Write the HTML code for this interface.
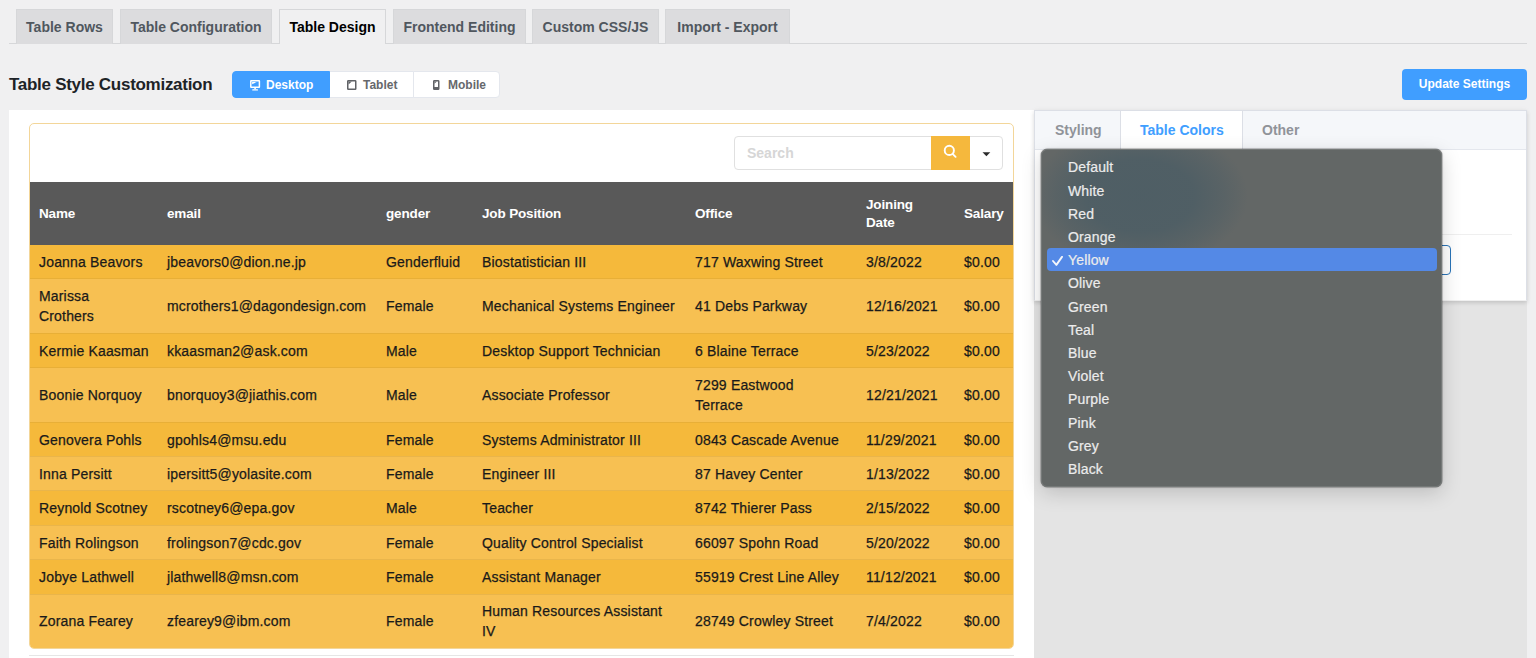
<!DOCTYPE html>
<html><head><meta charset="utf-8">
<style>
*{box-sizing:border-box;margin:0;padding:0}
html,body{width:1536px;height:658px;overflow:hidden}
body{background:#f0f0f1;font-family:"Liberation Sans",sans-serif;position:relative;color:#1d2327}
.abs{position:absolute}
/* nav tabs */
.navline{position:absolute;left:9px;top:43px;width:1518px;height:1px;background:#d6d7d9}
.tab{position:absolute;top:9px;height:35px;border:1px solid #d6d7d9;border-bottom:none;background:#dcdcde;color:#50575e;font-size:14px;font-weight:700;line-height:35px;text-align:center;white-space:nowrap}
.tab.active{background:#f0f0f1;color:#000;height:35px}
/* title */
.title{position:absolute;left:9px;top:73px;font-size:17px;font-weight:700;letter-spacing:-0.28px;color:#1d2327;white-space:nowrap;line-height:24px}
.seg{position:absolute;top:71px;height:27px;background:#fff;border:1px solid #e4e7ed;font-size:12px;font-weight:700;color:#66686c;line-height:27px;white-space:nowrap}
.seg.on{background:#409eff;border-color:#409eff;color:#fff}
.upd{position:absolute;left:1402px;top:69px;width:125px;height:31px;background:#409eff;border-radius:4px;color:#fff;font-size:12px;font-weight:700;line-height:31px;text-align:center}
/* left panel */
.lpanel{position:absolute;left:9px;top:110px;width:1025px;height:560px;background:#fff}
.twrap{position:absolute;left:29px;top:123px;width:985px;height:525.5px;border:1px solid #f3d699;border-radius:5px;overflow:hidden;background:#fff}
table{border-collapse:collapse;table-layout:fixed;width:985px;position:absolute;left:-1px;top:58px}
th{white-space:nowrap;background:#595959;color:#fff;font-size:13.5px;letter-spacing:-0.15px;font-weight:700;text-align:left;padding:2px 10px 0;line-height:18px;height:62.5px}
td{font-size:14px;color:#1a1a1a;padding:0.5px 10px 0;line-height:20px;white-space:nowrap;letter-spacing:0.17px;overflow:visible;-webkit-text-stroke:0.25px #1a1a1a;height:34.4px;border-bottom:1px solid rgba(120,90,20,.10)}
tr.o td{background:#f5b93b}
tr.e td{background:#f7c052}
tr.t td{height:54.4px}
.sline{position:absolute;left:29px;top:655px;width:985px;height:1px;background:#e6e6e6}
/* search */
.sbox{position:absolute;left:734px;top:136px;width:269px;height:34px;border:1px solid #e0e0e0;border-radius:4px;background:#fff}
.sph{position:absolute;left:747px;top:143px;font-size:14px;font-weight:700;color:#d6d6d6;line-height:20px}
.sbtn{position:absolute;left:931px;top:136px;width:39px;height:34px;background:#f5b83d}
/* right */
.rcol{position:absolute;left:1034px;top:300px;width:493px;height:400px;background:#e4e4e4}
.rpanel{position:absolute;left:1034px;top:110px;width:493px;height:190.5px;background:#fff;border:1px solid #dcdfe6;border-bottom-color:#f0f0f0;box-shadow:0 2px 4px rgba(0,0,0,.12),0 0 6px rgba(0,0,0,.04)}
.rhead{position:absolute;left:0;top:0;width:491px;height:39px;background:#f5f7fa;border-bottom:1px solid #e4e7ed}
.rtab{position:absolute;top:0;height:39px;font-size:14px;font-weight:700;color:#909399;line-height:39px;padding-left:20px;white-space:nowrap}
.rtab.on{background:#fff;color:#409eff;border-left:1px solid #dcdfe6;border-right:1px solid #dcdfe6;height:40px;padding-left:19px}
/* popup */
.pop{position:absolute;left:1041px;top:149px;width:401px;height:338px;border-radius:6px;background:#636766;border:1px solid #757978;box-shadow:0 0 0 0.5px rgba(0,0,0,.35),0 6px 20px rgba(0,0,0,.17),0 0 3px rgba(0,0,0,.15);overflow:hidden}
.pop .tint{position:absolute;left:0;top:0;width:400px;height:336px;background:radial-gradient(ellipse 108px 72px at 98px 46px,rgba(64,88,100,.58) 0%,rgba(64,88,100,.55) 50%,rgba(64,88,100,.28) 78%,rgba(64,88,100,0) 100%)}
.item{position:absolute;left:26px;font-size:14px;color:#ececec;line-height:20px;white-space:nowrap;letter-spacing:0.15px;-webkit-text-stroke:0.2px #ececec}
.hl{position:absolute;left:5px;top:98px;width:390px;height:23px;background:#5489e6;border-radius:4px}
</style></head><body>

<div class="navline"></div>
<div class="tab" style="left:16px;width:97px">Table Rows</div>
<div class="tab" style="left:120px;width:152px">Table Configuration</div>
<div class="tab active" style="left:279px;width:107px">Table Design</div>
<div class="tab" style="left:393px;width:133px">Frontend Editing</div>
<div class="tab" style="left:532px;width:127px">Custom CSS/JS</div>
<div class="tab" style="left:665px;width:125px">Import - Export</div>

<div class="title">Table Style Customization</div>
<div class="seg on" style="left:232px;width:98px;border-radius:4px 0 0 4px"><svg style="position:absolute;left:17px;top:8px" width="11" height="11" viewBox="0 0 11 11"><rect x="0.8" y="0.8" width="8.6" height="6.4" rx="0.3" fill="none" stroke="#fff" stroke-width="1.5"/><path d="M2.1 4.3 L6.6 2.1 L2.1 2.1Z" fill="#fff"/><rect x="4.3" y="7.2" width="1.6" height="2" fill="#fff"/><rect x="2.2" y="9.2" width="5.8" height="1.4" rx="0.6" fill="#fff"/></svg><span style="position:absolute;left:33px">Desktop</span></div>
<div class="seg" style="left:330px;width:84px;border-left:none"><svg style="position:absolute;left:17px;top:8px" width="10" height="11" viewBox="0 0 10 11"><rect x="0.75" y="0.75" width="8" height="8.6" rx="0.6" fill="none" stroke="#606266" stroke-width="1.5"/><path d="M1.5 1.5 L4.8 1.5 L1.5 4.6Z" fill="#606266"/></svg><span style="position:absolute;left:33px">Tablet</span></div>
<div class="seg" style="left:413px;width:87px;border-radius:0 4px 4px 0"><svg style="position:absolute;left:19px;top:8px" width="7" height="11" viewBox="0 0 7 11"><rect x="0.75" y="0.75" width="5" height="8.6" rx="0.6" fill="none" stroke="#606266" stroke-width="1.5"/><rect x="0.75" y="7" width="5" height="2.4" fill="#606266"/><path d="M1.5 1.5 L3.8 1.5 L1.5 3.8Z" fill="#606266"/></svg><span style="position:absolute;left:34px">Mobile</span></div>
<div class="upd">Update Settings</div>

<div class="lpanel"></div>
<div class="twrap">
<table>
<colgroup><col style="width:128px"><col style="width:219px"><col style="width:96px"><col style="width:213px"><col style="width:171px"><col style="width:98px"><col style="width:60px"></colgroup>
<tr><th>Name</th><th>email</th><th>gender</th><th>Job Position</th><th>Office</th><th>Joining<br>Date</th><th>Salary</th></tr>
<tr class="o"><td>Joanna Beavors</td><td>jbeavors0@dion.ne.jp</td><td>Genderfluid</td><td>Biostatistician III</td><td>717 Waxwing Street</td><td>3/8/2022</td><td>$0.00</td></tr>
<tr class="e t"><td>Marissa<br>Crothers</td><td>mcrothers1@dagondesign.com</td><td>Female</td><td>Mechanical Systems Engineer</td><td>41 Debs Parkway</td><td>12/16/2021</td><td>$0.00</td></tr>
<tr class="o"><td>Kermie Kaasman</td><td>kkaasman2@ask.com</td><td>Male</td><td>Desktop Support Technician</td><td>6 Blaine Terrace</td><td>5/23/2022</td><td>$0.00</td></tr>
<tr class="e t"><td>Boonie Norquoy</td><td>bnorquoy3@jiathis.com</td><td>Male</td><td>Associate Professor</td><td>7299 Eastwood<br>Terrace</td><td>12/21/2021</td><td>$0.00</td></tr>
<tr class="o"><td>Genovera Pohls</td><td>gpohls4@msu.edu</td><td>Female</td><td>Systems Administrator III</td><td>0843 Cascade Avenue</td><td>11/29/2021</td><td>$0.00</td></tr>
<tr class="e"><td>Inna Persitt</td><td>ipersitt5@yolasite.com</td><td>Female</td><td>Engineer III</td><td>87 Havey Center</td><td>1/13/2022</td><td>$0.00</td></tr>
<tr class="o"><td>Reynold Scotney</td><td>rscotney6@epa.gov</td><td>Male</td><td>Teacher</td><td>8742 Thierer Pass</td><td>2/15/2022</td><td>$0.00</td></tr>
<tr class="e"><td>Faith Rolingson</td><td>frolingson7@cdc.gov</td><td>Female</td><td>Quality Control Specialist</td><td>66097 Spohn Road</td><td>5/20/2022</td><td>$0.00</td></tr>
<tr class="o"><td>Jobye Lathwell</td><td>jlathwell8@msn.com</td><td>Female</td><td>Assistant Manager</td><td>55919 Crest Line Alley</td><td>11/12/2021</td><td>$0.00</td></tr>
<tr class="e t"><td>Zorana Fearey</td><td>zfearey9@ibm.com</td><td>Female</td><td>Human Resources Assistant<br>IV</td><td>28749 Crowley Street</td><td>7/4/2022</td><td>$0.00</td></tr>
</table>
</div>
<div class="sline"></div>
<div class="sbox"></div>
<div class="sph">Search</div>
<div class="sbtn"><svg style="position:absolute;left:11px;top:7px" width="16" height="16" viewBox="0 0 16 16"><circle cx="7.3" cy="7.4" r="4.6" fill="none" stroke="#fff" stroke-width="1.9"/><path d="M10.6 10.8 L13.6 13.8" stroke="#fff" stroke-width="1.9" stroke-linecap="round"/></svg></div>
<svg style="position:absolute;left:982px;top:152px" width="9" height="5" viewBox="0 0 9 5"><path d="M0.5 0.2 L8.3 0.2 L4.4 4.2Z" fill="#2b2b2b"/></svg>

<div class="rcol"></div>
<div class="rpanel">
  <div class="rhead"></div>
  <div class="rtab" style="left:0;width:86px">Styling</div>
  <div class="rtab on" style="left:85px;width:123px">Table Colors</div>
  <div class="rtab" style="left:207px;width:100px">Other</div>
  <div style="position:absolute;left:20px;top:123px;width:457px;height:1px;background:#efefef"></div>
  <div style="position:absolute;left:200px;top:134px;width:216px;height:30px;border:1.5px solid #2a74b8;border-radius:4px;background:#fff"></div>
</div>

<div class="pop">
  <div class="tint"></div>
  <div class="hl"></div>
  <div class="item" style="top:7.35px">Default</div>
  <div class="item" style="top:30.55px">White</div>
  <div class="item" style="top:53.75px">Red</div>
  <div class="item" style="top:76.95px">Orange</div>
  <div class="item" style="top:100.15px">Yellow</div>
  <div class="item" style="top:123.35px">Olive</div>
  <div class="item" style="top:146.55px">Green</div>
  <div class="item" style="top:169.75px">Teal</div>
  <div class="item" style="top:192.95px">Blue</div>
  <div class="item" style="top:216.15px">Violet</div>
  <div class="item" style="top:239.35px">Purple</div>
  <div class="item" style="top:262.55px">Pink</div>
  <div class="item" style="top:285.75px">Grey</div>
  <div class="item" style="top:308.95px">Black</div>
  <svg style="position:absolute;left:10px;top:106px" width="12" height="11" viewBox="0 0 12 11"><path d="M1 5.0 L4.4 8.9 L10 0.9" fill="none" stroke="#f4f6fb" stroke-width="1.9" stroke-linecap="round" stroke-linejoin="round"/></svg>
</div>

</body></html>
